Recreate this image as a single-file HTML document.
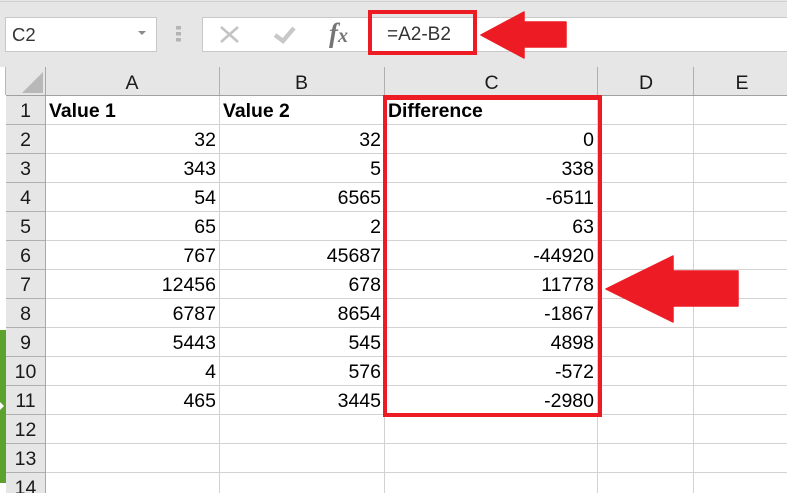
<!DOCTYPE html>
<html><head><meta charset="utf-8">
<style>
html,body{margin:0;padding:0;background:#fff}
#p{position:relative;width:787px;height:493px;overflow:hidden;background:#fff;font-family:"Liberation Sans",sans-serif;color:#000}
#p div{position:absolute}
.t{font-size:19.5px;line-height:29px;height:29px;white-space:nowrap}
.r{text-align:right}
.h{text-align:center;color:#1a1a1a}
.b{font-weight:bold;font-size:19.4px}
</style></head><body><div id="p">
<div style="left:0;top:0;width:787px;height:95px;background:#e6e6e6"></div>
<div style="left:0;top:1px;width:787px;height:1px;background:#d0d0d0"></div>
<div style="left:0;top:95px;width:6px;height:398px;background:#fff"></div>
<div style="left:6px;top:95px;width:39px;height:398px;background:#e6e6e6"></div>
<div style="left:0;top:67px;width:6px;height:28px;background:#fff"></div>
<div style="left:0;top:330px;width:6px;height:153px;background:#5da12e"></div>

<!-- name box -->
<div style="left:5px;top:17px;width:150px;height:33px;background:#fff;border:1px solid #c8c8c8"></div>
<div class="t" style="left:12px;top:20px;color:#333;font-size:18.5px">C2</div>
<svg style="position:absolute;left:137px;top:30px" width="10" height="7"><path d="M1 1H9L5 5Z" fill="#8a8a8a"/></svg>
<svg style="position:absolute;left:176px;top:25px" width="6" height="18"><rect x="0" y="1" width="5" height="3.5" fill="#b4b4b4"/><rect x="0" y="7" width="5" height="3.5" fill="#b4b4b4"/><rect x="0" y="13" width="5" height="3.5" fill="#b4b4b4"/></svg>

<!-- formula buttons -->
<div style="left:202px;top:17px;width:163px;height:33px;background:#fff;border:1px solid #c8c8c8"></div>
<svg style="position:absolute;left:218px;top:24px" width="24" height="22"><path d="M3 3L20 18M20 3L3 18" stroke="#c4c4c4" stroke-width="2.6" fill="none"/></svg>
<svg style="position:absolute;left:272px;top:24px" width="26" height="22"><path d="M3 11L11 17L22 4" stroke="#c8c8c8" stroke-width="4.4" fill="none"/></svg>
<div style="left:329px;top:17px;font-family:'Liberation Serif',serif;font-style:italic;font-weight:bold;line-height:32px;color:#757575;white-space:nowrap"><span style="font-size:27px">f</span><span style="font-size:20px">x</span></div>
<!-- formula bar -->
<div style="left:366px;top:17px;width:421px;height:33px;background:#fff;border-top:1px solid #c8c8c8;border-bottom:1px solid #c8c8c8"></div>
<div class="t" style="left:387px;top:20px;color:#333;font-size:19px">=A2-B2</div>

<!-- header column lines -->
<div style="left:5px;top:67px;width:1px;height:28px;background:#b8b8b8"></div>
<div style="left:45px;top:67px;width:1px;height:426px;background:#a8a8a8"></div>
<div style="left:219px;top:67px;width:1px;height:28px;background:#b0b0b0"></div>
<div style="left:384px;top:67px;width:1px;height:28px;background:#b0b0b0"></div>
<div style="left:597px;top:67px;width:1px;height:28px;background:#b0b0b0"></div>
<div style="left:693px;top:67px;width:1px;height:28px;background:#b0b0b0"></div>
<div style="left:6px;top:95px;width:781px;height:1px;background:#a0a0a0"></div>
<svg style="position:absolute;left:20px;top:70px" width="24" height="24"><path d="M23 2V23H2Z" fill="#b8b8b8"/></svg>

<!-- grid vertical -->
<div style="left:219px;top:96px;width:1px;height:397px;background:#d2d2d2"></div>
<div style="left:384px;top:96px;width:1px;height:397px;background:#d2d2d2"></div>
<div style="left:597px;top:96px;width:1px;height:397px;background:#d2d2d2"></div>
<div style="left:693px;top:96px;width:1px;height:397px;background:#d2d2d2"></div>
<!-- grid horizontal -->
<div style="left:46px;top:124px;width:741px;height:1px;background:#d2d2d2"></div>
<div style="left:46px;top:153px;width:741px;height:1px;background:#d2d2d2"></div>
<div style="left:46px;top:182px;width:741px;height:1px;background:#d2d2d2"></div>
<div style="left:46px;top:211px;width:741px;height:1px;background:#d2d2d2"></div>
<div style="left:46px;top:240px;width:741px;height:1px;background:#d2d2d2"></div>
<div style="left:46px;top:269px;width:741px;height:1px;background:#d2d2d2"></div>
<div style="left:46px;top:298px;width:741px;height:1px;background:#d2d2d2"></div>
<div style="left:46px;top:327px;width:741px;height:1px;background:#d2d2d2"></div>
<div style="left:46px;top:356px;width:741px;height:1px;background:#d2d2d2"></div>
<div style="left:46px;top:385px;width:741px;height:1px;background:#d2d2d2"></div>
<div style="left:46px;top:414px;width:741px;height:1px;background:#d2d2d2"></div>
<div style="left:46px;top:443px;width:741px;height:1px;background:#d2d2d2"></div>
<div style="left:46px;top:472px;width:741px;height:1px;background:#d2d2d2"></div>
<!-- row header lines -->
<div style="left:6px;top:124px;width:39px;height:1px;background:#b0b0b0"></div>
<div style="left:6px;top:153px;width:39px;height:1px;background:#b0b0b0"></div>
<div style="left:6px;top:182px;width:39px;height:1px;background:#b0b0b0"></div>
<div style="left:6px;top:211px;width:39px;height:1px;background:#b0b0b0"></div>
<div style="left:6px;top:240px;width:39px;height:1px;background:#b0b0b0"></div>
<div style="left:6px;top:269px;width:39px;height:1px;background:#b0b0b0"></div>
<div style="left:6px;top:298px;width:39px;height:1px;background:#b0b0b0"></div>
<div style="left:6px;top:327px;width:39px;height:1px;background:#b0b0b0"></div>
<div style="left:6px;top:356px;width:39px;height:1px;background:#b0b0b0"></div>
<div style="left:6px;top:385px;width:39px;height:1px;background:#b0b0b0"></div>
<div style="left:6px;top:414px;width:39px;height:1px;background:#b0b0b0"></div>
<div style="left:6px;top:443px;width:39px;height:1px;background:#b0b0b0"></div>
<div style="left:6px;top:472px;width:39px;height:1px;background:#b0b0b0"></div>

<!-- column headers -->
<div class="t h" style="left:45px;width:174px;top:69px">A</div>
<div class="t h" style="left:219px;width:165px;top:69px">B</div>
<div class="t h" style="left:385px;width:213px;top:69px">C</div>
<div class="t h" style="left:598px;width:96px;top:69px">D</div>
<div class="t h" style="left:694px;width:96px;top:69px">E</div>

<!-- row headers -->
<div class="t h" style="left:6px;width:39px;top:97px">1</div>
<div class="t h" style="left:6px;width:39px;top:126px">2</div>
<div class="t h" style="left:6px;width:39px;top:155px">3</div>
<div class="t h" style="left:6px;width:39px;top:184px">4</div>
<div class="t h" style="left:6px;width:39px;top:213px">5</div>
<div class="t h" style="left:6px;width:39px;top:242px">6</div>
<div class="t h" style="left:6px;width:39px;top:271px">7</div>
<div class="t h" style="left:6px;width:39px;top:300px">8</div>
<div class="t h" style="left:6px;width:39px;top:329px">9</div>
<div class="t h" style="left:6px;width:39px;top:358px">10</div>
<div class="t h" style="left:6px;width:39px;top:387px">11</div>
<div class="t h" style="left:6px;width:39px;top:416px">12</div>
<div class="t h" style="left:6px;width:39px;top:445px">13</div>
<div class="t h" style="left:6px;width:39px;top:474px">14</div>

<!-- row 1 -->
<div class="t b" style="left:49px;top:97px">Value 1</div>
<div class="t b" style="left:223px;top:97px">Value 2</div>
<div class="t b" style="left:388px;top:97px">Difference</div>

<!-- col A -->
<div class="t r" style="left:46px;width:170px;top:126px">32</div>
<div class="t r" style="left:46px;width:170px;top:155px">343</div>
<div class="t r" style="left:46px;width:170px;top:184px">54</div>
<div class="t r" style="left:46px;width:170px;top:213px">65</div>
<div class="t r" style="left:46px;width:170px;top:242px">767</div>
<div class="t r" style="left:46px;width:170px;top:271px">12456</div>
<div class="t r" style="left:46px;width:170px;top:300px">6787</div>
<div class="t r" style="left:46px;width:170px;top:329px">5443</div>
<div class="t r" style="left:46px;width:170px;top:358px">4</div>
<div class="t r" style="left:46px;width:170px;top:387px">465</div>
<!-- col B -->
<div class="t r" style="left:220px;width:161px;top:126px">32</div>
<div class="t r" style="left:220px;width:161px;top:155px">5</div>
<div class="t r" style="left:220px;width:161px;top:184px">6565</div>
<div class="t r" style="left:220px;width:161px;top:213px">2</div>
<div class="t r" style="left:220px;width:161px;top:242px">45687</div>
<div class="t r" style="left:220px;width:161px;top:271px">678</div>
<div class="t r" style="left:220px;width:161px;top:300px">8654</div>
<div class="t r" style="left:220px;width:161px;top:329px">545</div>
<div class="t r" style="left:220px;width:161px;top:358px">576</div>
<div class="t r" style="left:220px;width:161px;top:387px">3445</div>
<!-- col C -->
<div class="t r" style="left:385px;width:209px;top:126px">0</div>
<div class="t r" style="left:385px;width:209px;top:155px">338</div>
<div class="t r" style="left:385px;width:209px;top:184px">-6511</div>
<div class="t r" style="left:385px;width:209px;top:213px">63</div>
<div class="t r" style="left:385px;width:209px;top:242px">-44920</div>
<div class="t r" style="left:385px;width:209px;top:271px">11778</div>
<div class="t r" style="left:385px;width:209px;top:300px">-1867</div>
<div class="t r" style="left:385px;width:209px;top:329px">4898</div>
<div class="t r" style="left:385px;width:209px;top:358px">-572</div>
<div class="t r" style="left:385px;width:209px;top:387px">-2980</div>

<!-- red boxes -->
<div style="left:383px;top:95px;width:211px;height:313px;border:4px solid #ed1c24;border-top-width:5px"></div>
<div style="left:368px;top:10px;width:101px;height:37px;border:4px solid #ed1c24"></div>

<!-- arrows -->
<svg style="position:absolute;left:0;top:0" width="787" height="493">
<path d="M481 35L524 12V22H566V47H524V58Z" fill="#ed1c24" stroke="#ed1c24" stroke-width="1.5" stroke-linejoin="round"/>
<path d="M606 289L673 256V271H738V306H673V322Z" fill="#ed1c24" stroke="#ed1c24" stroke-width="1.5" stroke-linejoin="round"/>
<path d="M0 402L4 406L0 410Z" fill="#fff"/>
</svg>
</div></body></html>
